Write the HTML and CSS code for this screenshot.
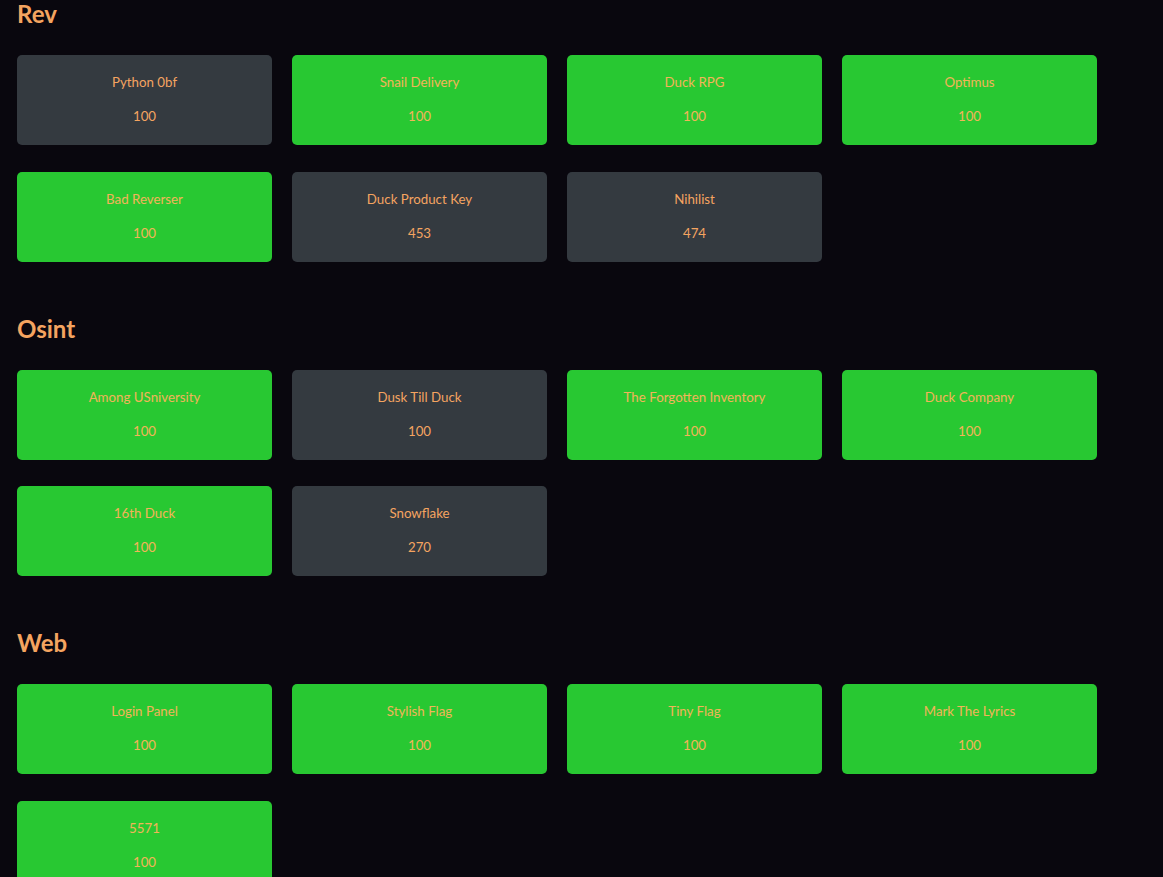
FILE: index.html
```html
<!DOCTYPE html>
<html lang="en">
<head>
<meta charset="utf-8">
<title>Challenges</title>
<link rel="stylesheet" href="styles.css">
</head>
<body>
<main class="board">
  <section class="category">
    <h2 class="category-title">Rev</h2>
    <div class="grid">
      <div class="card">
        <p class="card-name">Python 0bf</p>
        <p class="card-points">100</p>
      </div>
      <div class="card solved">
        <p class="card-name">Snail Delivery</p>
        <p class="card-points">100</p>
      </div>
      <div class="card solved">
        <p class="card-name">Duck RPG</p>
        <p class="card-points">100</p>
      </div>
      <div class="card solved">
        <p class="card-name">Optimus</p>
        <p class="card-points">100</p>
      </div>
      <div class="card solved">
        <p class="card-name">Bad Reverser</p>
        <p class="card-points">100</p>
      </div>
      <div class="card">
        <p class="card-name">Duck Product Key</p>
        <p class="card-points">453</p>
      </div>
      <div class="card">
        <p class="card-name">Nihilist</p>
        <p class="card-points">474</p>
      </div>
    </div>
  </section>

  <section class="category">
    <h2 class="category-title">Osint</h2>
    <div class="grid">
      <div class="card solved">
        <p class="card-name">Among USniversity</p>
        <p class="card-points">100</p>
      </div>
      <div class="card">
        <p class="card-name">Dusk Till Duck</p>
        <p class="card-points">100</p>
      </div>
      <div class="card solved">
        <p class="card-name">The Forgotten Inventory</p>
        <p class="card-points">100</p>
      </div>
      <div class="card solved">
        <p class="card-name">Duck Company</p>
        <p class="card-points">100</p>
      </div>
      <div class="card solved">
        <p class="card-name">16th Duck</p>
        <p class="card-points">100</p>
      </div>
      <div class="card">
        <p class="card-name">Snowflake</p>
        <p class="card-points">270</p>
      </div>
    </div>
  </section>

  <section class="category">
    <h2 class="category-title">Web</h2>
    <div class="grid">
      <div class="card solved">
        <p class="card-name">Login Panel</p>
        <p class="card-points">100</p>
      </div>
      <div class="card solved">
        <p class="card-name">Stylish Flag</p>
        <p class="card-points">100</p>
      </div>
      <div class="card solved">
        <p class="card-name">Tiny Flag</p>
        <p class="card-points">100</p>
      </div>
      <div class="card solved">
        <p class="card-name">Mark The Lyrics</p>
        <p class="card-points">100</p>
      </div>
      <div class="card solved">
        <p class="card-name">5571</p>
        <p class="card-points">100</p>
      </div>
    </div>
  </section>
</main>
</body>
</html>
```

FILE: styles.css
```css
html, body {
  margin: 0;
  padding: 0;
  background: #09070e;
}

body {
  font-family: Lato, "Liberation Sans", sans-serif;
  color: #f4a460;
}

.board {
  margin-top: -0.8px;
  padding: 0 17px 40px;
  display: flex;
  flex-direction: column;
  gap: 52px;
}

.category-title {
  margin: 0 0 27px;
  font-size: 24px;
  line-height: 29px;
  font-weight: 700;
  color: #f4a460;
}

.grid {
  display: grid;
  grid-template-columns: repeat(4, 255px);
  column-gap: 20px;
  row-gap: 26.5px;
}

.card {
  height: 90px;
  box-sizing: border-box;
  padding-top: 17px;
  border-radius: 5px;
  background: #343a40;
  text-align: center;
  display: flex;
  flex-direction: column;
  gap: 14px;
}

.card.solved {
  background: #28c832;
}

.card-name,
.card-points {
  margin: 0;
  font-size: 13.3px;
  line-height: 20px;
}

.card.solved .card-name,
.card.solved .card-points {
  color: #f2b45a;
}
```
